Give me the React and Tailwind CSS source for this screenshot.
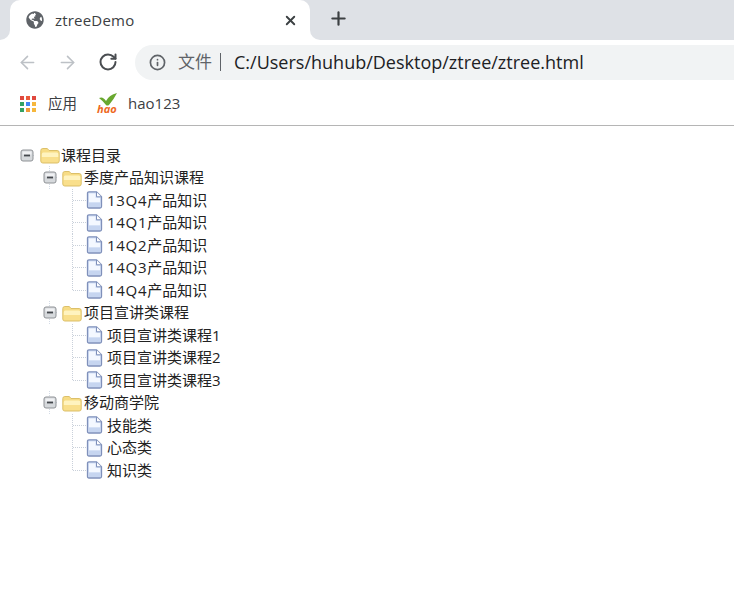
import React from 'react';
import { ArrowLeft, ArrowRight, RotateCw, Info, Plus, X } from 'lucide-react';
import { FaGlobeAmericas } from 'react-icons/fa';

// tree data, same shape as the zTree nodes on the page
const tree = {
  name: '课程目录',
  children: [
    {
      name: '季度产品知识课程',
      children: [
        { code: '13Q4', name: '产品知识' },
        { code: '14Q1', name: '产品知识' },
        { code: '14Q2', name: '产品知识' },
        { code: '14Q3', name: '产品知识' },
        { code: '14Q4', name: '产品知识' },
      ],
    },
    {
      name: '项目宣讲类课程',
      children: [{ name: '项目宣讲类课程1' }, { name: '项目宣讲类课程2' }, { name: '项目宣讲类课程3' }],
    },
    {
      name: '移动商学院',
      children: [{ name: '技能类' }, { name: '心态类' }, { name: '知识类' }],
    },
  ],
};

function SwitchIcon({ ticks }) {
  return (
    <svg width="14" height="23" viewBox="0 0 14 23" className="shrink-0">
      {ticks && <path d="M6.500 0v5M6.500 18v5" stroke="#d3dbe6" strokeDasharray="1 1" />}
      <path d="M14 11.500h-1" stroke="#d3dbe6" />
      <rect x="1" y="6" width="12" height="11" rx="2" fill="#d6d9dc" stroke="#8f9296" />
      <rect x="2.500" y="7.500" width="9" height="3" fill="#f0f1f3" />
      <path d="M4 11.500h6" stroke="#44484d" strokeWidth="1.800" />
    </svg>
  );
}

function FolderIcon() {
  return (
    <svg width="20" height="18" viewBox="0 0 20 18" className="shrink-0">
      <path d="M.8 15V4.500Q.8 2.500 2.800 2.500h4.500l1.700 2h8.200q2 0 2 2V15q0 2-2 2H2.800Q.8 17 .8 15z" fill="#f7dc85" stroke="#dcc06a" />
      <path d="M1.800 8q0-1.500 1.500-1.500h13.500q1.500 0 1.500 1.500v3H1.800z" fill="#fff3bf" />
      <path d="M1.800 11h16.500v3.500q0 1.500-1.500 1.500H3.300q-1.500 0-1.500-1.500z" fill="#f9df8c" />
    </svg>
  );
}

function FileIcon() {
  return (
    <svg width="17" height="18" viewBox="0 0 17 18" className="shrink-0">
      <path d="M1.500 2.300q0-1.500 1.500-1.500h7.500l5 5v9.700q0 1.500-1.500 1.500H3q-1.500 0-1.500-1.500z" fill="#d5e1f6" stroke="#7f90ba" strokeWidth="1.300" />
      <path d="M3 2.500h6.500v4.500H14v4H3z" fill="#f4f8ff" />
      <path d="M3 12h11v4H3z" fill="#c6d5f0" />
      <path d="M10.500 1v4.800h4.800" fill="#fff" stroke="#7f90ba" />
    </svg>
  );
}

// dotted connector from the parent's line to the file icon
function Connector({ last }) {
  return (
    <svg width="15" height="23" viewBox="0 0 15 23" className="shrink-0">
      <path d={last ? 'M1.500 0v11.500' : 'M1.500 0v23'} stroke="#c9d0da" strokeDasharray="1 1" />
      <path d="M2 11.500h13" stroke="#c9d0da" strokeDasharray="1 1" />
    </svg>
  );
}

function Row({ className, children }) {
  return <div className={`flex h-[22.5px] items-center text-[15px] leading-none text-[#222] ${className}`}>{children}</div>;
}

function Tree() {
  return (
    <div className="pt-[18px]">
      <Row className="pl-[20px]">
        <SwitchIcon />
        <span className="w-[6px]" />
        <FolderIcon />
        <span className="ml-[1px]">{tree.name}</span>
      </Row>
      {tree.children.map((group) => (
        <div key={group.name}>
          <Row className="pl-[43px]">
            <SwitchIcon ticks />
            <span className="w-[5px]" />
            <FolderIcon />
            <span className="ml-[2px]">{group.name}</span>
          </Row>
          {group.children.map((item, i) => (
            <Row key={item.name + item.code} className="pl-[71px]">
              <Connector last={i === group.children.length - 1} />
              <FileIcon />
              <span className="ml-[4px]">
                {item.code && <span className="tracking-[0.7px]">{item.code}</span>}
                {item.name}
              </span>
            </Row>
          ))}
        </div>
      ))}
    </div>
  );
}

function AppsIcon() {
  const colors = ['#e0483e', '#ea5a3c', '#e0483e', '#34a263', '#4285f4', '#f6b73c', '#34a263', '#f29a38', '#f6b73c'];
  return (
    <svg width="16" height="16" viewBox="0 0 16 16" className="shrink-0">
      {colors.map((c, i) => (
        <rect key={i} x={(i % 3) * 6} y={Math.floor(i / 3) * 6} width="4" height="4" fill={c} />
      ))}
    </svg>
  );
}

function HaoIcon() {
  return (
    <div className="relative h-[22px] w-[21px] shrink-0">
      <svg width="21" height="14" viewBox="0 0 21 14" className="block">
        <path d="M2 5q4-2 7 3 3-6 11-8-3 6-8 12-2 1-3 0Q6 8 2 5z" fill="#69a82f" />
      </svg>
      <span className="absolute bottom-[1px] left-0 text-[11px] font-bold italic leading-none text-[#ee6a1f]">hao</span>
    </div>
  );
}

export default function App() {
  return (
    <div className="h-[592px] w-[734px] overflow-hidden bg-white font-['Open_Sans','Noto_Sans_CJK_SC',sans-serif]">
      {/* tab strip */}
      <div className="flex h-10 bg-[#dee1e6]">
        <div className="h-[10px] w-[10px] self-end bg-white">
          <div className="h-full rounded-br-[10px] bg-[#dee1e6]" />
        </div>
        <div className="flex w-[300px] items-center rounded-t-[10px] bg-white pl-[16px] pr-[12px]">
          <FaGlobeAmericas className="h-[18px] w-[18px] shrink-0 text-[#5f6368]" />
          <span className="ml-[11px] flex-1 text-[15px] tracking-[0.2px] text-[#3c4043]">ztreeDemo</span>
          <X size={15} strokeWidth={3} className="text-[#3c4043]" />
        </div>
        <div className="h-[10px] w-[10px] self-end bg-white">
          <div className="h-full rounded-bl-[10px] bg-[#dee1e6]" />
        </div>
        <Plus size={21} strokeWidth={2.5} className="ml-[8px] mt-[8px] text-[#3c4043]" />
      </div>

      {/* toolbar */}
      <div className="flex h-[44px] items-center pl-[17px]">
        <ArrowLeft size={21} strokeWidth={1.8} className="text-[#bdc1c6]" />
        <ArrowRight size={21} strokeWidth={1.8} className="ml-[19px] text-[#bdc1c6]" />
        <RotateCw size={20} strokeWidth={2.4} className="ml-[20px] text-[#4a4d51]" />
        <div className="ml-[17px] flex h-[35px] flex-1 items-center rounded-l-full bg-[#f1f3f4] pl-[14px]">
          <Info size={17} strokeWidth={2.4} className="text-[#5f6368]" />
          <span className="ml-[12px] text-[17px] text-[#5f6368]">文件</span>
          <span className="ml-[8px] h-[18px] w-px bg-[#5f6368]" />
          <span className="ml-[13px] text-[18px] text-[#202124]">C:/Users/huhub/Desktop/ztree/ztree.html</span>
        </div>
      </div>

      {/* bookmarks bar */}
      <div className="flex h-[42px] items-center border-b border-[#b5b5b5] pb-[2px] pl-[20px]">
        <AppsIcon />
        <span className="ml-[12px] text-[14.5px] text-[#3c4043]">应用</span>
        <div className="ml-[20px]">
          <HaoIcon />
        </div>
        <span className="ml-[10px] text-[15px] text-[#3c4043]">hao123</span>
      </div>

      <Tree />
    </div>
  );
}
